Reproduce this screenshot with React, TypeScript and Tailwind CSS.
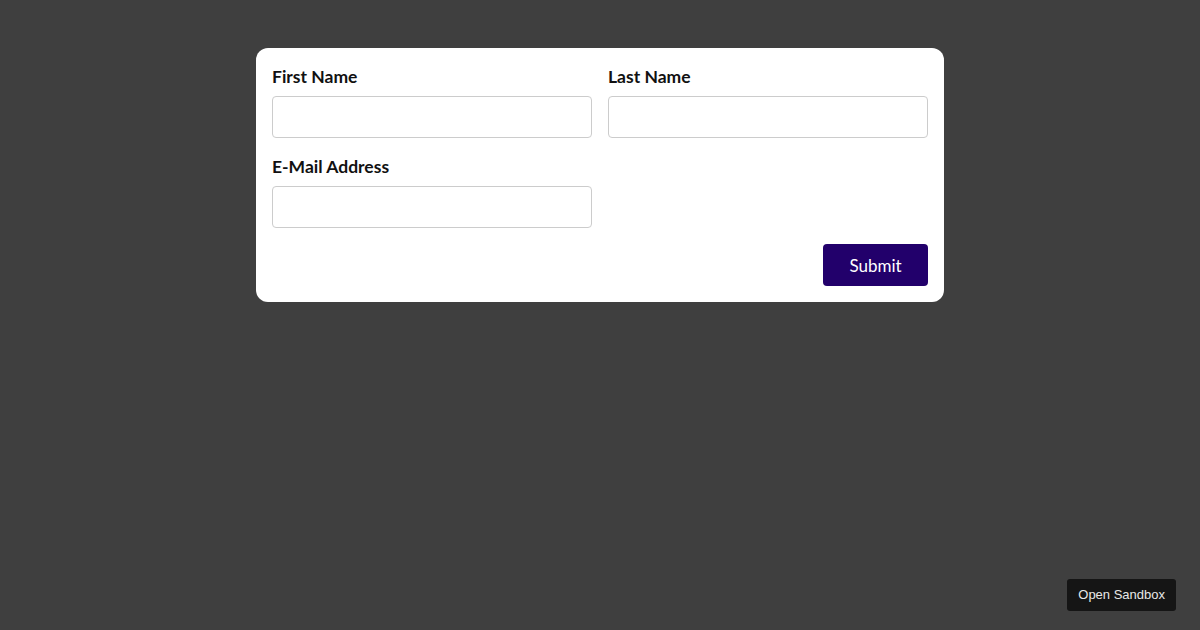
import React from "react";

const Field = ({ label }: { label: string }) => (
  <div className="flex flex-col">
    <label className="mb-2 h-6 pt-px text-[17.5px] font-bold leading-6 text-[#111]">{label}</label>
    <input
      type="text"
      className="h-[42px] w-full rounded-[4px] border border-[#cccccc] bg-white px-3 outline-none"
    />
  </div>
);

export default function App() {
  return (
    <div className="relative min-h-[630px] w-full bg-[#3f3f3f] pt-12 font-['Lato',sans-serif]">
      <div className="mx-auto w-[688px] rounded-xl bg-white p-4">
        <div className="grid grid-cols-2 gap-4">
          <Field label="First Name" />
          <Field label="Last Name" />
          <Field label="E-Mail Address" />
        </div>
        <div className="mt-4 flex justify-end">
          <button className="h-[42px] w-[105px] rounded-[4px] bg-[#22006b] pt-px text-[17px] text-white">
            Submit
          </button>
        </div>
      </div>
      <button className="absolute bottom-[19px] right-6 h-8 rounded-[3px] bg-[#151515] px-[11px] font-['Liberation_Sans',sans-serif] text-[13px] text-[#e8e8e8]">
        Open Sandbox
      </button>
    </div>
  );
}
